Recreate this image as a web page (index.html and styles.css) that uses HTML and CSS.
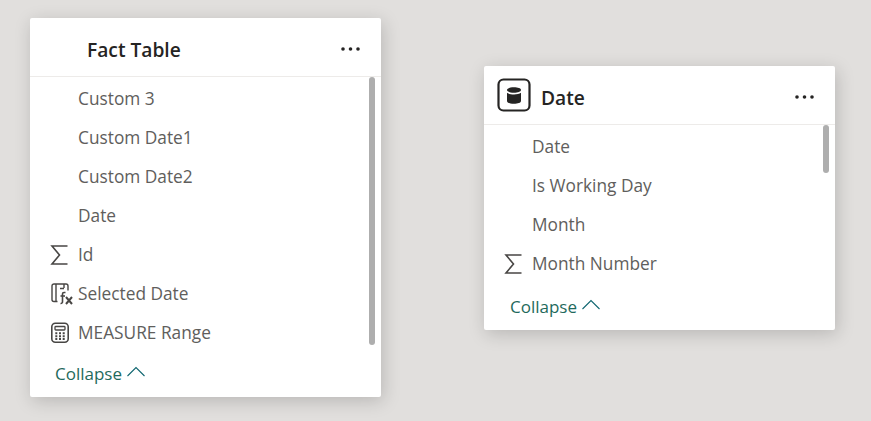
FILE: index.html
```html
<!DOCTYPE html>
<html lang="en">
<head>
  <meta charset="UTF-8" />
  <title>Model view</title>
  <link rel="stylesheet" href="styles.css">
</head>
<body>
  <div class="canvas">
    <div class="card card-fact">
      <div class="card-head">
        <span class="head-icon"></span>
        <span class="card-title">Fact Table</span>
        <svg class="more" width="19" height="4" viewBox="0 0 19 4"><circle cx="2" cy="2" r="1.8"/><circle cx="9.500" cy="2" r="1.8"/><circle cx="17" cy="2" r="1.8"/></svg>
      </div>
      <div class="fields">
        <div class="field"><span class="field-icon"></span>Custom 3</div>
        <div class="field"><span class="field-icon"></span>Custom Date1</div>
        <div class="field"><span class="field-icon"></span>Custom Date2</div>
        <div class="field"><span class="field-icon"></span>Date</div>
        <div class="field">
          <span class="field-icon">
            <svg width="20" height="20" viewBox="0 0 20 20" fill="none" stroke="#484644" stroke-width="1.600"><path d="M18.500 1H3L10.500 10L3 19H18.500"/></svg>
          </span>Id
        </div>
        <div class="field">
          <span class="field-icon">
            <svg width="25" height="22" viewBox="0 0 25 22" fill="none" stroke="#484644" stroke-width="1.400"><path d="M8.500 18.500H5A2 2 0 0 1 3 16.500V3A2 2 0 0 1 5 1H17A2 2 0 0 1 19 3V7.500"/><path d="M7 1V18.500M11 5.500H15M15 1V5"/><path d="M16.500 9.500H15A1.500 1.500 0 0 0 13.500 11V18.500A1.800 1.800 0 0 1 11.500 20.500" stroke-width="1.600"/><path d="M11.500 13H16" stroke-width="1.600"/><path d="M17 14L23 21M23 14L17 21" stroke-width="2"/></svg>
          </span>Selected Date
        </div>
        <div class="field">
          <span class="field-icon">
            <svg width="21" height="22" viewBox="0 0 21 22" fill="none" stroke="#484644" stroke-width="1.600"><rect x="2.800" y="1.300" width="16.400" height="19" rx="3.500"/><rect x="6" y="4.500" width="10" height="3.500" rx=".8" stroke-width="1.300"/><path d="M6.300 11.300h2M10 11.300h2M13.700 11.300h2M6.300 14.200h2M10 14.200h2M13.700 14.200h2M6.300 17.100h2M10 17.100h2M13.700 17.100h2" stroke-width="2"/></svg>
          </span>MEASURE Range
        </div>
      </div>
      <div class="collapse collapse-fact">Collapse
        <svg class="chevron" width="20" height="11" viewBox="0 0 20 11" fill="none" stroke="#0f6670" stroke-width="1.100"><path d="M1.500 10L10 1.500L18.500 10"/></svg>
      </div>
      <div class="scrollbar scrollbar-fact"></div>
    </div>

    <div class="card card-date">
      <div class="card-head">
        <span class="head-icon">
          <svg width="34" height="34" viewBox="0 0 34 34"><rect x="1.500" y="1.500" width="31" height="31" rx="5" fill="none" stroke="#252423" stroke-width="2.200"/><path fill="#252423" d="M10 12C10 10.300 13.200 9.300 17 9.300S24 10.300 24 12S20.800 14.700 17 14.700S10 13.700 10 12ZM10 14.800C11.500 16 14.200 16.500 17 16.500S22.500 16 24 14.800V23C24 24.700 20.800 25.800 17 25.800S10 24.700 10 23Z"/></svg>
        </span>
        <span class="card-title">Date</span>
        <svg class="more" width="19" height="4" viewBox="0 0 19 4"><circle cx="2" cy="2" r="1.8"/><circle cx="9.500" cy="2" r="1.8"/><circle cx="17" cy="2" r="1.8"/></svg>
      </div>
      <div class="fields">
        <div class="field"><span class="field-icon"></span>Date</div>
        <div class="field"><span class="field-icon"></span>Is Working Day</div>
        <div class="field"><span class="field-icon"></span>Month</div>
        <div class="field">
          <span class="field-icon">
            <svg width="20" height="20" viewBox="0 0 20 20" fill="none" stroke="#484644" stroke-width="1.600"><path d="M18.500 1H3L10.500 10L3 19H18.500"/></svg>
          </span>Month Number
        </div>
      </div>
      <div class="collapse collapse-date">Collapse
        <svg class="chevron" width="20" height="11" viewBox="0 0 20 11" fill="none" stroke="#0f6670" stroke-width="1.100"><path d="M1.500 10L10 1.500L18.500 10"/></svg>
      </div>
      <div class="scrollbar scrollbar-date"></div>
    </div>
  </div>
</body>
</html>
```

FILE: styles.css
```css
body {
  margin: 0;
  background: #e1dfdd;
  font-family: "Open Sans", "Noto Sans", sans-serif;
}
.canvas {
  position: relative;
  width: 871px;
  height: 421px;
  overflow: hidden;
}
.card {
  position: absolute;
  width: 351px;
  background: #fff;
  border-radius: 2px;
  box-shadow: 2px 4px 18px rgba(0,0,0,0.18);
}
.card-fact {
  left: 30px;
  top: 18px;
  height: 379px;
}
.card-date {
  left: 484px;
  top: 66px;
  height: 264px;
}
.card-head {
  display: flex;
  align-items: center;
  height: 58px;
  padding: 0 21px 0 13px;
  border-bottom: 1px solid #edebe9;
}
.head-icon {
  width: 34px;
  height: 34px;
  margin-right: 10px;
  flex-shrink: 0;
}
.card-title {
  flex: 1;
  margin-top: 4px;
  font-size: 19.200px;
  font-weight: 600;
  color: #252423;
}
.more {
  margin-top: 4px;
  fill: #252423;
}
.fields {
  padding-top: 2px;
}
.field {
  display: flex;
  align-items: center;
  height: 39px;
  padding-left: 19px;
  font-size: 17.300px;
  color: #605e5c;
}
.field-icon {
  display: flex;
  align-items: center;
  width: 29px;
  flex-shrink: 0;
}
.field-icon svg {
  flex-shrink: 0;
}
.collapse {
  display: flex;
  align-items: center;
  gap: 4px;
  height: 24px;
  padding-left: 25px;
  font-size: 17px;
  color: #1f6a5c;
}
.collapse-fact {
  margin-top: 9px;
}
.collapse-date {
  margin-top: 11px;
  padding-left: 26px;
}
.chevron {
  margin-bottom: 3px;
}
.scrollbar {
  position: absolute;
  left: 339px;
  top: 59px;
  width: 6px;
  border-radius: 3px;
  background: #aeaeae;
}
.scrollbar-fact {
  height: 268px;
}
.scrollbar-date {
  height: 48px;
}
```
